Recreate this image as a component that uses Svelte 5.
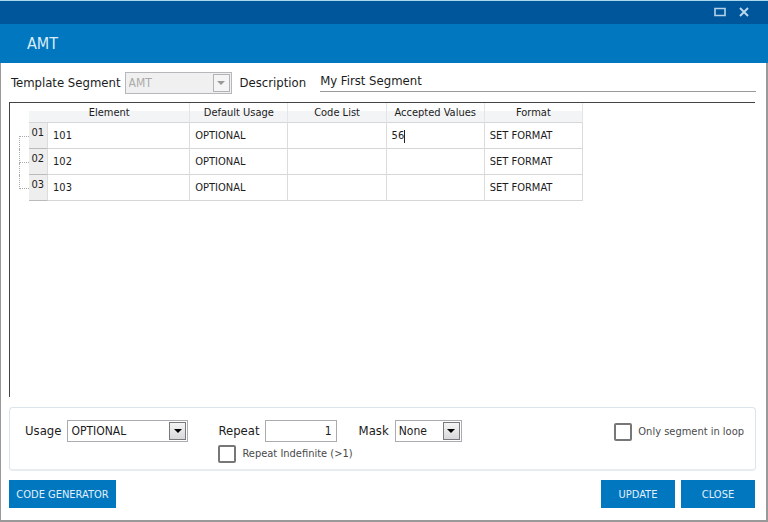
<script>
  let segment = $state('AMT');
  let description = $state('My First Segment');
  let usage = $state('OPTIONAL');
  let repeat = $state('1');
  let mask = $state('None');
  let indefinite = $state(false);
  let onlyInLoop = $state(false);
  let active = $state(0);

  let rows = $state([
    { no: '01', element: '101', usage: 'OPTIONAL', codes: '', accepted: '56' },
    { no: '02', element: '102', usage: 'OPTIONAL', codes: '', accepted: '' },
    { no: '03', element: '103', usage: 'OPTIONAL', codes: '', accepted: '' }
  ]);
</script>

{#snippet arrow()}
  <span class="arrow" aria-hidden="true">
    <svg width="8" height="4" viewBox="0 0 8 4"><path d="M0 0h8L4 4z" fill="currentColor" /></svg>
  </span>
{/snippet}

<div class="window">
  <div class="titlebar">
    <button class="winbtn" aria-label="Maximize">
      <svg width="12" height="10" viewBox="0 0 12 10"><path d="M1 1.5h10v7H1z" fill="none" stroke="#b4d3ea" stroke-width="1.6" /></svg>
    </button>
    <button class="winbtn" aria-label="Close window">
      <svg width="10" height="10" viewBox="0 0 10 10"><path d="M1 1l8 8M9 1L1 9" stroke="#b9d7ec" stroke-width="2" /></svg>
    </button>
  </div>
  <header><h1>AMT</h1></header>

  <main>
    <div class="top">
      <label for="segment">Template Segment</label>
      <div class="select disabled seg">
        <select id="segment" bind:value={segment} disabled><option>AMT</option></select>
        {@render arrow()}
      </div>
      <label for="description" class="desc-label">Description</label>
      <input id="description" class="desc" bind:value={description} />
    </div>

    <div class="panel">
      <table>
        <colgroup>
          <col class="c-tree" /><col class="c-no" /><col class="c-el" />
          <col class="c" /><col class="c" /><col class="c" /><col class="c" />
        </colgroup>
        <thead>
          <tr>
            <td class="blank"></td>
            <th colspan="2">Element</th>
            <th>Default Usage</th>
            <th>Code List</th>
            <th>Accepted Values</th>
            <th>Format</th>
          </tr>
        </thead>
        <tbody>
          {#each rows as row, i}
            <tr>
              <td class="tree"></td>
              <td class="no">{row.no}</td>
              <td>{row.element}</td>
              <td>{row.usage}</td>
              <td>{row.codes}</td>
              <td>
                <div class="edit">
                  <input aria-label="Accepted values {row.no}" bind:value={row.accepted} />
                  {#if active === i}<span class="caret"></span>{/if}
                </div>
              </td>
              <td>SET FORMAT</td>
            </tr>
          {/each}
        </tbody>
      </table>
    </div>

    <div class="options">
      <div class="field">
        <label for="usage">Usage</label>
        <div class="select usage">
          <select id="usage" bind:value={usage}><option>OPTIONAL</option></select>
          {@render arrow()}
        </div>
      </div>
      <div class="stack">
        <div class="field">
          <label for="repeat">Repeat</label>
          <input id="repeat" class="repeat" bind:value={repeat} />
          <label for="mask" class="mask-label">Mask</label>
          <div class="select mask">
            <select id="mask" bind:value={mask}><option>None</option></select>
            {@render arrow()}
          </div>
        </div>
        <label class="check"><input type="checkbox" bind:checked={indefinite} />Repeat Indefinite (&gt;1)</label>
      </div>
      <label class="check loop"><input type="checkbox" bind:checked={onlyInLoop} />Only segment in loop</label>
    </div>

    <footer>
      <button class="btn">CODE GENERATOR</button>
      <span class="spacer"></span>
      <button class="btn narrow">UPDATE</button>
      <button class="btn narrow">CLOSE</button>
    </footer>
  </main>
</div>

<style>
  .window, .window * { box-sizing: border-box; }
  .window {
    min-height: 100vh;
    display: flex;
    flex-direction: column;
    border-top: 1px solid #a9d8ec;
    background: #fff;
    color: #1c1c1c;
    font: 13px/16px "DejaVu Sans Condensed", "Noto Sans", sans-serif;
  }
  input, select, button { font: inherit; color: inherit; margin: 0; border-radius: 0; }
  .titlebar {
    height: 23px;
    background: #00569b;
    display: flex;
    justify-content: flex-end;
    align-items: center;
    gap: 13px;
    padding: 0 19px 2px 0;
  }
  .winbtn { display: flex; padding: 0; border: 0; background: none; }
  header {
    height: 39px;
    background: #0077bf;
    display: flex;
    align-items: center;
    padding-left: 27px;
  }
  h1 { margin: 0; font-size: 16px; line-height: 20px; font-weight: 400; color: #dcecf7; }
  main {
    flex: 1;
    display: flex;
    flex-direction: column;
    border: solid #999;
    border-width: 0 2px 2px 1px;
    padding: 8px 10px 12px 8px;
  }
  .top { display: flex; align-items: center; height: 24px; padding-left: 2px; }
  .seg { width: 107px; margin-left: 4px; }
  .desc-label { margin-left: 8px; }
  .desc {
    flex: 1;
    min-width: 0;
    height: 21px;
    margin-left: 14px;
    padding: 0 0 2px;
    border: 0;
    border-bottom: 1px solid #999;
    background: none;
    outline: 0;
    align-self: flex-start;
  }
  .select { position: relative; height: 22px; font-size: 12px; }
  .select select {
    appearance: none;
    width: 100%;
    height: 22px;
    padding: 0 20px 0 3px;
    border: 1px solid #aaabb0;
    background: #fff;
    opacity: 1;
  }
  .arrow {
    position: absolute;
    top: 2px;
    right: 2px;
    width: 17px;
    height: 18px;
    display: flex;
    align-items: center;
    justify-content: center;
    border: 1px solid #77797d;
    background: linear-gradient(#f4f4f4, #d8d8da);
    color: #000;
    pointer-events: none;
  }
  .disabled select { color: #aaa; background: #f0f0f0; border-color: #b5b7ba; }
  .disabled .arrow { color: #999; background: #f4f4f4; border-color: #b0b2b6; }

  .panel {
    flex: 1;
    margin: 7px 1px 0 0;
    border: solid #444;
    border-width: 1px 0 0 1px;
    padding-left: 9px;
    overflow: auto;
  }
  table { border-collapse: separate; border-spacing: 0; table-layout: fixed; width: 564px; font-size: 11px; line-height: 14px; }
  .c-tree { width: 10px; }
  .c-no { width: 19px; }
  .c-el { width: 142px; }
  .c { width: 98px; }
  th {
    height: 20px;
    padding: 1px 0 0;
    font-weight: 400;
    background: linear-gradient(#fff 40%, #f3f4f5 41%);
    border-right: 1px solid #e4e5e8;
    border-bottom: 1px solid #d6d7d9;
  }
  tbody td {
    height: 26px;
    padding: 1px 0 0 5px;
    border-right: 1px solid #dcdcdc;
    border-bottom: 1px solid #d6d6d6;
  }
  .blank { padding: 0; }
  tbody td.no {
    padding: 0 3px 6px 0;
    text-align: right;
    background: #eee;
    border-bottom-color: #bbb;
  }
  tbody td.tree { position: relative; padding: 0; border: 0; }
  .tree::before {
    content: "";
    position: absolute;
    inset: 0 0 12px;
    border: 0 dotted #aaa;
    border-width: 0 0 1px 1px;
  }
  tr:first-child .tree::before { top: 13px; border-width: 1px 0 0 1px; bottom: 0; }
  tr:nth-child(2) .tree::after {
    content: "";
    position: absolute;
    inset: 14px auto 0 0;
    border-left: 1px dotted #aaa;
  }
  .edit { display: flex; align-items: center; }
  .edit input { field-sizing: content; min-width: 1px; border: 0; padding: 0; background: none; outline: 0; }
  .caret { width: 1px; height: 13px; background: #222; }

  .options {
    display: flex;
    align-items: flex-start;
    margin-top: 10px;
    min-height: 64px;
    padding: 12px 11px 5px 15px;
    border: 1px solid #dbe4ea;
    border-bottom: 2px solid #e6ecf0;
    border-radius: 4px;
  }
  .field { display: flex; align-items: center; height: 22px; }
  .usage { width: 121px; margin-left: 6px; }
  .stack { margin-left: 30px; }
  .repeat {
    width: 72px;
    height: 22px;
    margin-left: 5px;
    padding: 0 4px;
    border: 1px solid #aaabb0;
    text-align: right;
    font-size: 12px;
  }
  .mask-label { margin-left: 22px; }
  .mask { width: 67px; margin-left: 6px; }
  .check { display: flex; align-items: center; gap: 6px; margin-top: 3px; font-size: 11px; line-height: 18px; color: #4a4a4a; }
  .check input {
    appearance: none;
    width: 18px;
    height: 18px;
    border: 2px solid #777;
    border-radius: 2px;
    background: #fff;
  }
  .check input:checked { background: #0077bf; }
  .loop { margin-left: auto; }
  footer { display: flex; gap: 6px; margin-top: 9px; padding-right: 1px; }
  .spacer { flex: 1; }
  .btn {
    height: 28px;
    min-width: 107px;
    padding: 2px 4px 0;
    border: 0;
    background: #0077bf;
    color: #e3f0f9;
    font-size: 11px;
    white-space: nowrap;
  }
  .narrow { min-width: 74px; }
</style>
